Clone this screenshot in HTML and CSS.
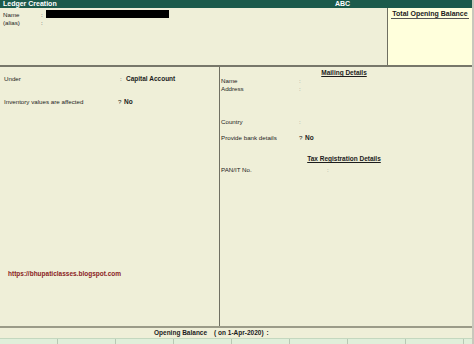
FILE: index.html
```html
<!DOCTYPE html>
<html>
<head>
<meta charset="utf-8">
<link rel="stylesheet" href="styles.css">
</head>
<body>
<div class="screen">
  <div class="titlebar">
    <span class="title">Ledger Creation</span>
    <span class="company">ABC</span>
  </div>
  <div class="top">
    <div class="top-left">
      <div class="row"><span class="lbl">Name</span><span class="colon">:</span><span class="namebox"></span></div>
      <div class="row"><span class="lbl">(alias)</span><span class="colon">:</span></div>
    </div>
    <div class="top-right">
      <div class="tob">Total Opening Balance</div>
    </div>
  </div>
  <div class="middle">
    <div class="col-left">
      <div class="frow under"><span class="flbl">Under</span><span class="fval"><span class="sep">:</span><b>Capital Account</b></span></div>
      <div class="frow inv"><span class="flbl">Inventory values are affected</span><span class="fval q"><span class="sep">?</span><b>No</b></span></div>
      <div class="url">https://bhupaticlasses.blogspot.com</div>
    </div>
    <div class="col-right">
      <div class="head">Mailing Details</div>
      <div class="mrow"><span class="mlbl">Name</span><span class="msep">:</span></div>
      <div class="mrow"><span class="mlbl">Address</span><span class="msep">:</span></div>
      <div class="mrow country"><span class="mlbl">Country</span><span class="msep">:</span></div>
      <div class="mrow bank"><span class="mlbl">Provide bank details</span><span class="msep q">?</span><b>No</b></div>
      <div class="head tax">Tax Registration Details</div>
      <div class="mrow pan"><span class="mlbl">PAN/IT No.</span><span class="psep">:</span></div>
    </div>
  </div>
  <div class="footer">
    <span class="ob">Opening Balance</span><span class="ondate">( on 1-Apr-2020)</span><span class="obc">:</span>
  </div>
  <div class="buttons">
    <span></span><span></span><span></span><span></span><span></span><span></span><span></span><span></span>
  </div>
</div>
</body>
</html>
```
FILE: styles.css
```css
html, body {
  margin: 0;
  padding: 0;
}
body {
  width: 474px;
  height: 344px;
  overflow: hidden;
  background: #efefd8;
  font-family: "Liberation Sans", Arial, sans-serif;
  font-size: 6.2px;
  color: #1c1c1c;
}
.screen {
  width: 472px;
  height: 344px;
  display: flex;
  flex-direction: column;
  border-right: 2px solid #c8c8bc;
}
.titlebar {
  height: 8px;
  background: #1b5a4b;
  color: #fff;
  font-weight: bold;
  font-size: 7px;
  line-height: 8px;
  position: relative;
  padding-left: 3px;
  flex: none;
}
.company {
  position: absolute;
  left: 335px;
  top: 0;
}
.top {
  height: 57px;
  display: flex;
  border-bottom: 2px solid #77776a;
  flex: none;
}
.top-left {
  flex: 1;
  padding: 2px 0 0 3px;
}
.row {
  display: flex;
  align-items: center;
  height: 8px;
}
.lbl {
  width: 38px;
}
.colon {
  width: 5px;
}
.namebox {
  width: 123px;
  height: 8px;
  background: #000;
}
.top-right {
  width: 84px;
  background: #ffffdc;
  border-left: 1px solid #6f6f62;
  padding-top: 2px;
}
.tob {
  margin: 0 3px 0 3px;
  font-weight: bold;
  font-size: 7px;
  text-align: center;
  border-bottom: 1px solid #555;
  line-height: 8px;
}
.middle {
  flex: 1;
  display: flex;
}
.col-left {
  width: 220px;
  border-right: 1px solid #6f6f62;
  padding-left: 4px;
  box-sizing: border-box;
}
.frow {
  display: flex;
  height: 8px;
  line-height: 8px;
}
.under {
  margin-top: 8px;
}
.inv {
  margin-top: 15px;
}
.flbl {
  width: 114px;
}
.fval .sep {
  display: inline-block;
  width: 6px;
  padding-left: 2px;
}
.fval.q .sep {
  padding-left: 0;
}
.fval b {
  font-size: 6.5px;
}
.url {
  margin-top: 164px;
  margin-left: 4px;
  color: #8b1c22;
  font-weight: bold;
  font-size: 6.5px;
}
.col-right {
  flex: 1;
  padding-left: 1px;
}
.head {
  text-align: center;
  font-weight: bold;
  font-size: 6.5px;
  text-decoration: underline;
  line-height: 8px;
  margin-top: 2px;
  margin-right: 5px;
}
.head.tax {
  margin-top: 13px;
}
.mrow {
  display: flex;
  height: 8px;
  line-height: 8px;
}
.mlbl {
  width: 78px;
}
.msep {
  width: 6px;
  color: #888;
}
.msep.q {
  color: #1c1c1c;
}
.mrow b {
  font-size: 6.5px;
}
.psep {
  margin-left: 28px;
  color: #888;
}
.country {
  margin-top: 25px;
}
.bank {
  margin-top: 8px;
}
.pan {
  margin-top: 3px;
}
.footer {
  height: 10px;
  border-top: 2px solid #9b9b88;
  flex: none;
  font-weight: bold;
  font-size: 6.5px;
  line-height: 10px;
  padding-left: 154px;
  display: flex;
}
.ondate {
  margin-left: 7px;
}
.obc {
  margin-left: 3px;
}
.buttons {
  height: 5px;
  flex: none;
  display: flex;
  background: #e0efda;
  border-top: 1px solid #c4d8bf;
}
.buttons span {
  width: 57px;
  border-right: 1px solid #b8c8b4;
}
```
